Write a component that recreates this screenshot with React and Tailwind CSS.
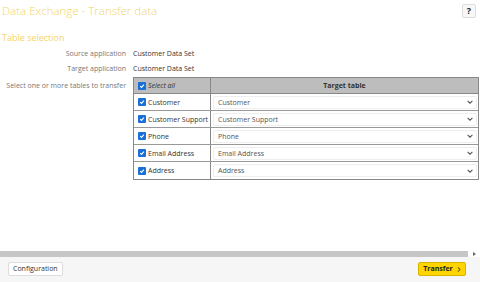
import React from "react";

const rows = ["Customer", "Customer Support", "Phone", "Email Address", "Address"];

function Check() {
  return (
    <span className="inline-flex items-center justify-center w-[8px] h-[8px] bg-[#1a6fd8] rounded-[1px] mr-[2px] shrink-0">
      <svg width="6" height="6" viewBox="0 0 10 10">
        <path d="M2 5.2 L4.2 7.4 L8.2 2.6" stroke="white" strokeWidth="1.8" fill="none" />
      </svg>
    </span>
  );
}

function Chevron() {
  return (
    <svg width="6" height="4" viewBox="0 0 10 6" className="shrink-0">
      <path d="M1 1 L5 5 L9 1" stroke="#555" strokeWidth="1.8" fill="none" />
    </svg>
  );
}

export default function App() {
  return (
    <div className="w-[480px] h-[282px] bg-white flex flex-col overflow-hidden" style={{ fontFamily: '"Open Sans", sans-serif' }}>
      <div className="flex-1 flex flex-col">
        <div className="flex items-start justify-between pl-[2px] pr-[4px] pt-[3px]">
          <div className="text-[11.5px] leading-[16px] text-[#f3d56a] font-light">Data Exchange - Transfer data</div>
          <div className="w-[14px] h-[14px] mt-[1px] border border-[#ddd] rounded-[2px] bg-[#f8f8f8] flex items-center justify-center text-[9px] font-bold text-[#222]">?</div>
        </div>
        <div className="pl-[2px] mt-[13px] text-[9px] leading-[12px] text-[#f3d56a]">Table selection</div>
        <div className="mt-[2px] grid grid-cols-[126px_1fr] gap-x-[7px] text-[7px] leading-[15px]">
          <div className="text-right text-[#777]">Source application</div>
          <div className="text-[#333]">Customer Data Set</div>
          <div className="text-right text-[#777]">Target application</div>
          <div className="text-[#333]">Customer Data Set</div>
          <div className="text-right text-[#777] pt-[2px]">Select one or more tables to transfer</div>
          <div className="pt-[1px] pr-[1px]">
            <div className="border border-[#888] text-[7px]">
              <div className="flex h-[16px] bg-[#bdbdbd] border-b border-[#888]">
                <div className="w-[77px] border-r border-[#888] flex items-center pl-[4px] italic text-[#333]">
                  <Check />Select all
                </div>
                <div className="flex-1 flex items-center justify-center font-bold text-[#333]">Target table</div>
              </div>
              {rows.map((r, i) => (
                <div key={r} className={`flex h-[17px] ${i < rows.length - 1 ? "border-b border-[#999]" : ""}`}>
                  <div className="w-[77px] border-r border-[#888] flex items-center pl-[4px] text-[#333]">
                    <Check />{r}
                  </div>
                  <div className="flex-1 flex items-center pl-[2px] pr-[1px]">
                    <div className="flex-1 h-[13px] border border-[#eee] rounded-[2px] bg-white flex items-center justify-between pl-[4px] pr-[3px] text-[#555]">
                      <span>{r}</span>
                      <Chevron />
                    </div>
                  </div>
                </div>
              ))}
            </div>
          </div>
        </div>
      </div>
      <div className="h-[7px] flex items-center bg-white">
        <div className="w-[468px] h-[6px] bg-[#c6c6c6]"></div>
        <div className="flex-1 flex items-center justify-center">
          <svg width="3" height="4" viewBox="0 0 3 4"><path d="M0 0 L3 2 L0 4Z" fill="#666" /></svg>
        </div>
      </div>
      <div className="h-[25px] bg-[#f6f6f6] flex items-center justify-between px-[8px] pb-[1px]">
        <div className="h-[14px] px-[4px] border border-[#ddd] bg-white rounded-[2px] flex items-center text-[7px] text-[#333]">Configuration</div>
        <div className="h-[14px] w-[48px] mr-[6px] border border-[#d9b400] bg-[#ffd500] rounded-[2px] flex items-center justify-center gap-[4px] text-[7px] font-bold text-[#222]">
          Transfer
          <svg width="4" height="5" viewBox="0 0 4 6"><path d="M1 0.5 L3 3 L1 5.5" stroke="#222" strokeWidth="1.2" fill="none" /></svg>
        </div>
      </div>
    </div>
  );
}
